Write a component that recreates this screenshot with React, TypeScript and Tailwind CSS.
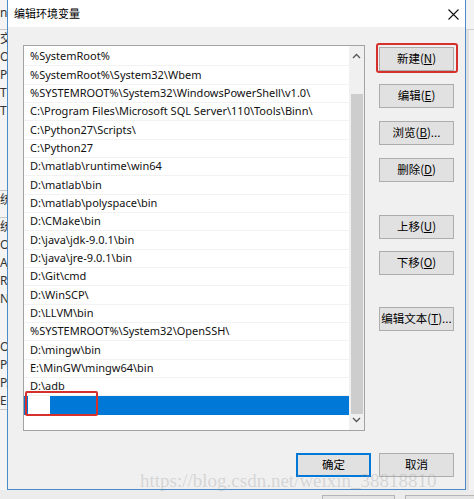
import React from "react";

const paths = [
  "%SystemRoot%",
  "%SystemRoot%\\System32\\Wbem",
  "%SYSTEMROOT%\\System32\\WindowsPowerShell\\v1.0\\",
  "C:\\Program Files\\Microsoft SQL Server\\110\\Tools\\Binn\\",
  "C:\\Python27\\Scripts\\",
  "C:\\Python27",
  "D:\\matlab\\runtime\\win64",
  "D:\\matlab\\bin",
  "D:\\matlab\\polyspace\\bin",
  "D:\\CMake\\bin",
  "D:\\java\\jdk-9.0.1\\bin",
  "D:\\java\\jre-9.0.1\\bin",
  "D:\\Git\\cmd",
  "D:\\WinSCP\\",
  "D:\\LLVM\\bin",
  "%SYSTEMROOT%\\System32\\OpenSSH\\",
  "D:\\mingw\\bin",
  "E:\\MinGW\\mingw64\\bin",
  "D:\\adb",
];

function Btn({
  children,
  primary,
  className = "",
}: {
  children: React.ReactNode;
  primary?: boolean;
  className?: string;
}) {
  return (
    <div
      className={
        "flex h-[24px] w-[75px] items-center justify-center bg-[#e1e1e1] text-[11.5px] text-black " +
        (primary ? "border-2 border-[#0078d7] " : "border border-[#adadad] ") +
        className
      }
    >
      {children}
    </div>
  );
}

export default function App() {
  return (
    <div className="relative h-[499px] w-[474px] overflow-hidden bg-[#e9e9e9] font-['Noto_Sans','Noto_Sans_CJK_SC',sans-serif]">
      <div className="flex h-[490px]">
        {/* left background window strip */}
        <div className="flex w-[7px] flex-col overflow-hidden bg-[#f4f4f4] text-[12px] leading-[18px] text-[#333]">
          <div className="h-[30px] border-b border-[#c8c8c8] pt-[4px]">n</div>
          <div className="h-[18px]">交</div>
          <div className="h-[18px]">O</div>
          <div className="h-[18px]">Pa</div>
          <div className="h-[18px]">TE</div>
          <div className="h-[18px]">TM</div>
          <div className="h-[70px]"></div>
          <div className="h-[28px] border-y border-[#c8c8c8]">统</div>
          <div className="h-[18px]">统</div>
          <div className="h-[18px]">O</div>
          <div className="h-[18px]">A</div>
          <div className="h-[18px]">R</div>
          <div className="h-[18px]">N</div>
          <div className="h-[30px]"></div>
          <div className="h-[18px]">O</div>
          <div className="h-[18px]">Pa</div>
          <div className="h-[18px]">PA</div>
          <div className="h-[18px] border-b border-[#c8c8c8]">Ep</div>
        </div>

        {/* dialog */}
        <div className="flex w-[459px] flex-col border-x border-b border-[#4a8cc9]">
          {/* title bar */}
          <div className="flex h-[27px] items-center justify-between bg-white pl-[6px] pr-[6px]">
            <span className="text-[11px] text-black font-['Noto_Sans_CJK_SC',sans-serif]">编辑环境变量</span>
            <svg width="11" height="11" viewBox="0 0 11 11" className="mt-[1px]">
              <path d="M0.5 0.5 L10.5 10.5 M10.5 0.5 L0.5 10.5" stroke="#111" strokeWidth="1.1" />
            </svg>
          </div>

          {/* content */}
          <div className="flex flex-1 flex-col bg-[#f0f0f0] pl-[15px] pr-[11px] pt-[18px]">
            <div className="flex">
              {/* list box */}
              <div className="flex h-[386px] w-[342px] border border-[#a3a3a3] bg-white">
                <div className="flex flex-1 flex-col pt-[2px]">
                  {paths.map((p) => (
                    <div
                      key={p}
                      className="flex h-[18.33px] items-center border-b border-[#f2f2f2] pl-[6px] text-[11px] text-[#111] whitespace-nowrap"
                    >
                      {p}
                    </div>
                  ))}
                  <div className="flex h-[18.33px] items-stretch bg-[#0078d7] pl-[4px]">
                    <div className="w-[22px] bg-white" />
                  </div>
                </div>
                {/* scrollbar */}
                <div className="flex w-[15px] flex-col items-center bg-[#f0f0f0]">
                  <svg width="9" height="6" viewBox="0 0 9 6" className="mt-[7px]">
                    <path d="M1 5 L4.5 1.5 L8 5" stroke="#555" strokeWidth="1.3" fill="none" />
                  </svg>
                  <div className="mt-[35px] h-[320px] w-[12px] bg-[#cdcdcd]" />
                  <div className="flex-1" />
                  <svg width="9" height="6" viewBox="0 0 9 6" className="mb-[7px]">
                    <path d="M1 1 L4.5 4.5 L8 1" stroke="#555" strokeWidth="1.3" fill="none" />
                  </svg>
                </div>
              </div>

              {/* buttons */}
              <div className="ml-[14px] flex flex-col pt-[2px] font-['Noto_Sans_CJK_SC',sans-serif]">
                <Btn>新建(<u>N</u>)</Btn>
                <Btn className="mt-[13px]">编辑(<u>E</u>)</Btn>
                <Btn className="mt-[13px]">浏览(<u>B</u>)...</Btn>
                <Btn className="mt-[13px]">删除(<u>D</u>)</Btn>
                <Btn className="mt-[33px]">上移(<u>U</u>)</Btn>
                <Btn className="mt-[12px]">下移(<u>O</u>)</Btn>
                <Btn className="mt-[32px]">编辑文本(<u>T</u>)...</Btn>
              </div>
            </div>

            <div className="mt-[22px] flex justify-end gap-[8px] font-['Noto_Sans_CJK_SC',sans-serif]">
              <Btn primary>确定</Btn>
              <Btn>取消</Btn>
            </div>
          </div>
        </div>

        {/* right background strip */}
        <div className="flex w-[8px] flex-col bg-[#f3f3f3]">
          <div className="h-[30px] border-b border-[#d0d0d0]" />
          <div className="flex flex-1 border-l-[3px] border-[#e0e0e0]" />
        </div>
      </div>

      {/* bottom background strip */}
      <div className="flex h-[9px] items-end bg-[#ececec] pl-[322px]">
        <div className="h-[4px] w-[75px] border-x border-t border-[#b5b5b5] bg-[#e4e4e4]" />
        <div className="ml-[10px] h-[4px] w-[70px] border-l border-t border-[#b5b5b5] bg-[#e4e4e4]" />
      </div>

      {/* red annotations */}
      <div className="absolute left-[376px] top-[43px] h-[30px] w-[82px] rounded-[3px] border-[2.5px] border-[#d5302c]" />
      <div className="absolute left-[25px] top-[391px] h-[25px] w-[73px] rounded-[2px] border-[2.5px] border-[#d5302c]" />

      {/* watermark */}
      <div className="pointer-events-none absolute left-[140px] top-[467px] whitespace-nowrap font-['Liberation_Serif',serif] text-[19px] text-[#a0a0a0]/35">
        https://blog.csdn.net/weixin_38818810
      </div>
    </div>
  );
}
